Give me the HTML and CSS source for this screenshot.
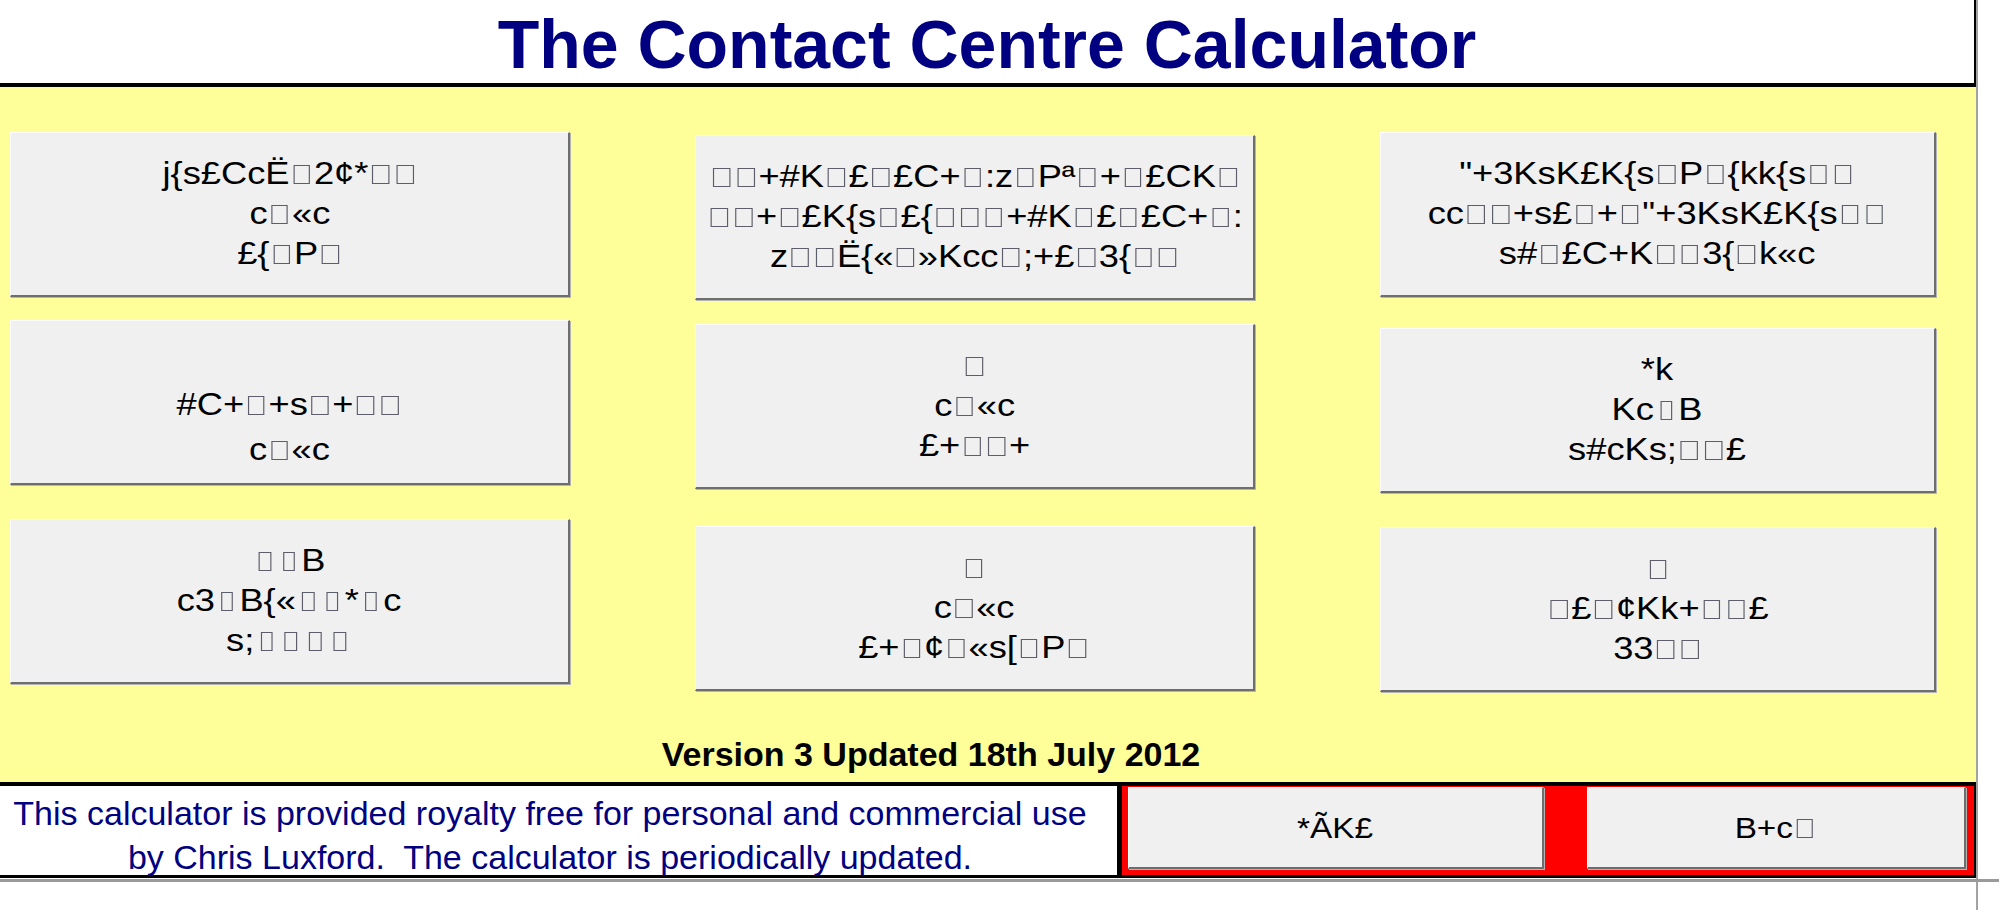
FILE: index.html
```html
<!DOCTYPE html>
<html lang="en">
<head>
<meta charset="utf-8">
<title>The Contact Centre Calculator</title>
<link rel="stylesheet" href="styles.css">
</head>
<body>
<div class="page">
  <header class="title-bar">
    <h1>The Contact Centre Calculator</h1>
  </header>

  <main class="panel">
    <div class="grid">
      <div class="key">
        <span class="label">j{s£CcË<span class="t"></span>2¢*<span class="t"></span><span class="t"></span><br>c<span class="t"></span>«c<br>£{<span class="t"></span>P<span class="t"></span></span>
      </div>
      <div class="key shift-3">
        <span class="label"><span class="t"></span><span class="t"></span>+#K<span class="t"></span>£<span class="t"></span>£C+<span class="t"></span>:z<span class="t"></span>Pª<span class="t"></span>+<span class="t"></span>£CK<span class="t"></span><br><span class="t"></span><span class="t"></span>+<span class="t"></span>£K{s<span class="t"></span>£{<span class="t"></span><span class="t"></span><span class="t"></span>+#K<span class="t"></span>£<span class="t"></span>£C+<span class="t"></span>:<br>z<span class="t"></span><span class="t"></span>Ë{«<span class="t"></span>»Kcc<span class="t"></span>;+£<span class="t"></span>3{<span class="t"></span><span class="t"></span></span>
      </div>
      <div class="key">
        <span class="label">"+3KsK£K{s<span class="t"></span>P<span class="t"></span>{kk{s<span class="t"></span><span class="t"></span><br>cc<span class="t"></span><span class="t"></span>+s£<span class="t"></span>+<span class="t"></span>"+3KsK£K{s<span class="t"></span><span class="t"></span><br>s#<span class="t"></span>£C+K<span class="t"></span><span class="t"></span>3{<span class="t"></span>k«c</span>
      </div>

      <div class="key spaced shift-up">
        <span class="label">&nbsp;<br>#C+<span class="t"></span>+s<span class="t"></span>+<span class="t"></span><span class="t"></span><br>c<span class="t"></span>«c</span>
      </div>
      <div class="key">
        <span class="label"><span class="t"></span><br>c<span class="t"></span>«c<br>£+<span class="t"></span><span class="t"></span>+</span>
      </div>
      <div class="key shift-4">
        <span class="label">*k<br>Kc<span class="t n"></span>B<br>s#cKs;<span class="t"></span><span class="t"></span>£</span>
      </div>

      <div class="key shift-3">
        <span class="label"><span class="t n"></span><span class="t n"></span>B<br>c3<span class="t n"></span>B{«<span class="t n"></span><span class="t n"></span>*<span class="t n"></span>c<br>s;<span class="t n"></span><span class="t n"></span><span class="t n"></span><span class="t n"></span></span>
      </div>
      <div class="key shift-10">
        <span class="label"><span class="t"></span><br>c<span class="t"></span>«c<br>£+<span class="t"></span>¢<span class="t"></span>«s[<span class="t"></span>P<span class="t"></span></span>
      </div>
      <div class="key shift-11">
        <span class="label"><span class="t"></span><br><span class="t"></span>£<span class="t"></span>¢Kk+<span class="t"></span><span class="t"></span>£<br>33<span class="t"></span><span class="t"></span></span>
      </div>
    </div>

    <p class="version">Version 3 Updated 18th July 2012</p>
  </main>

  <footer class="footer">
    <p class="note">This calculator is provided royalty free for personal and commercial use<br>by Chris Luxford.&nbsp; The calculator is periodically updated.</p>
    <div class="actions">
      <div class="key fkey wide"><span class="label">*ÃK£</span></div>
      <div class="key fkey narrow"><span class="label">B+c<span class="t"></span></span></div>
    </div>
  </footer>
  <div class="rule"></div>
</div>
</body>
</html>
```

FILE: styles.css
```css
* {
  box-sizing: border-box;
}

body {
  margin: 0;
  background: #ffffff;
  font-family: "Liberation Sans", Arial, sans-serif;
}

.page {
  width: 1978px;
  min-height: 910px;
  border-right: 2px solid #a3a3a3;
}

.title-bar {
  height: 87px;
  padding-top: 6px;
  background: #ffffff;
  border-bottom: 4px solid #000000;
  border-right: 2px solid #000000;
}

.title-bar h1 {
  margin: 0;
  font-size: 68px;
  line-height: 76px;
  font-weight: 700;
  color: #000080;
  text-align: center;
}

.panel {
  height: 695px;
  padding: 45px 0 0 10px;
  background: #ffff99;
}

.grid {
  display: grid;
  grid-template-columns: 560px 560px 556px;
  grid-template-rows: 165px 165px 165px;
  column-gap: 125px;
  row-gap: 27px;
}

.key {
  height: 165px;
  display: flex;
  align-items: center;
  justify-content: center;
  text-align: center;
  background: #f0f0f0;
  border-top: 1px solid #ffffff;
  border-left: 1px solid #ffffff;
  border-right: 2px solid #6e6e6e;
  border-bottom: 2px solid #6e6e6e;
  box-shadow: 1px 1px 0 #b4b4b4;
  color: #000000;
  font-size: 31px;
  line-height: 40px;
  white-space: nowrap;
}

.label {
  display: inline-block;
  transform: scaleX(1.17);
}

.key.spaced {
  padding-top: 4px;
  line-height: 45px;
}

.shift-up {
  margin-top: -4px;
}

.shift-3 {
  margin-top: 3px;
}

.shift-4 {
  margin-top: 4px;
}

.shift-10 {
  margin-top: 10px;
}

.shift-11 {
  margin-top: 11px;
}

.t {
  display: inline-block;
  width: 14.5px;
  height: 19px;
  margin: 0 3.2px;
  border: 1px solid #5e5e6a;
  vertical-align: baseline;
}

.t.n {
  width: 10.5px;
  margin: 0 5.2px;
}

.version {
  margin: 53px 0 0;
  padding-right: 124px;
  text-align: center;
  font-size: 34px;
  line-height: 40px;
  font-weight: 700;
  color: #000000;
}

.footer {
  display: flex;
  height: 96px;
  border-top: 4px solid #000000;
  border-bottom: 3px solid #000000;
  border-right: 2px solid #000000;
}

.note {
  width: 1117px;
  margin: 0;
  padding: 5px 17px 0 0;
  background: #ffffff;
  color: #000080;
  font-size: 34px;
  line-height: 44px;
  text-align: center;
  white-space: nowrap;
}

.actions {
  flex: 1;
  display: flex;
  gap: 43px;
  padding: 1px 8px 6px 6px;
  background: #ff0000;
  border-left: 5px solid #000000;
}

.fkey {
  height: auto;
  font-size: 29px;
}

.fkey .label {
  transform: scaleX(1.15);
}

.fkey.wide {
  width: 416px;
}

.fkey.narrow {
  width: 379px;
}

.rule {
  width: 1999px;
  height: 3px;
  margin-top: 1px;
  background: #9a9a9a;
}
```
